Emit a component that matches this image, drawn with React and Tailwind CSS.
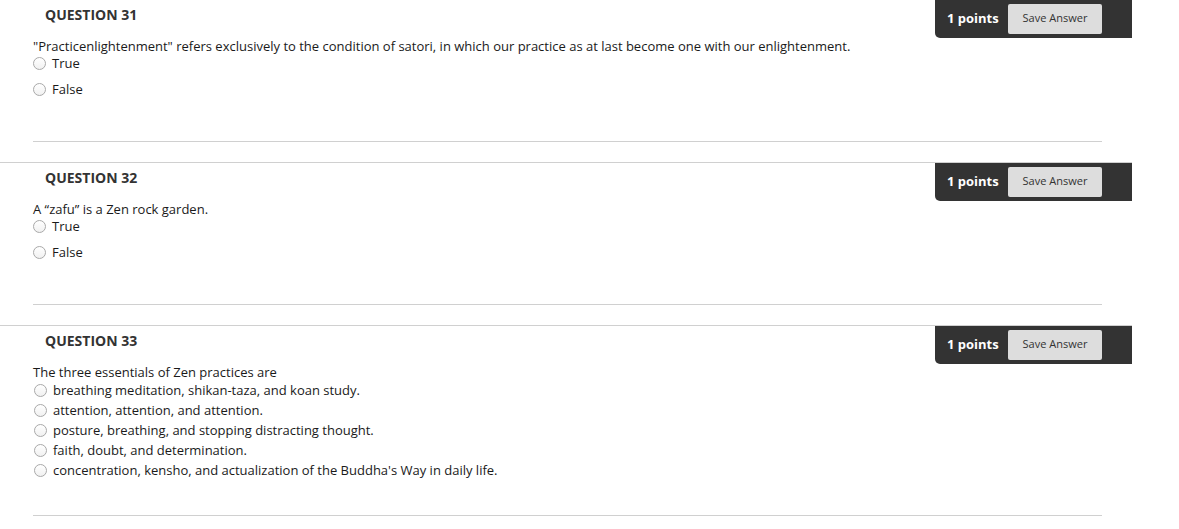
import React from 'react';

const questions = [
    {
        number: 31,
        text: '"Practicenlightenment" refers exclusively to the condition of satori, in which our practice as at last become one with our enlightenment.',
        type: 'tf',
        options: ['True', 'False'],
    },
    {
        number: 32,
        text: 'A \u201Czafu\u201D is a Zen rock garden.',
        type: 'tf',
        options: ['True', 'False'],
    },
    {
        number: 33,
        text: 'The three essentials of Zen practices are',
        type: 'mc',
        options: [
            'breathing meditation, shikan-taza, and koan study.',
            'attention, attention, and attention.',
            'posture, breathing, and stopping distracting thought.',
            'faith, doubt, and determination.',
            "concentration, kensho, and actualization of the Buddha's Way in daily life.",
        ],
    },
];

// Plain radio circle like the browser default on mac
const Radio = () => (
    <span className="inline-block w-[13px] h-[13px] rounded-full border border-[#a9a9a9] bg-gradient-to-b from-white to-[#f1f1f1] shrink-0" />
);

const Question = ({ q, first }) => (
    <section className={`w-[1132px] ${first ? '' : 'border-t border-[#d0d0d0]'}`}>
        <div className="flex justify-between items-start h-[38px]">
            <h3 className="pl-[45px] pt-[5px] text-[14px] leading-[20px] font-bold text-[#333]">
                QUESTION {q.number}
            </h3>
            <div className="flex items-center w-[197px] h-[38px] bg-[#333333] rounded-bl-[5px] pl-[12px] pb-[1px]">
                <span className="text-white font-bold text-[13px] w-[61px]">1 points</span>
                <button
                    type="button"
                    className="w-[94px] h-[30px] bg-[#dddddd] text-[#333] text-[11px] rounded-[2px]"
                >
                    Save Answer
                </button>
            </div>
        </div>

        <div className="pl-[33px] text-[13px] text-[#1a1a1a]">
            <p className="leading-[16px]">{q.text}</p>
            {q.type === 'tf' ? (
                <div className="flex flex-col gap-[8px]">
                    {q.options.map((opt) => (
                        <label key={opt} className="flex items-center gap-[6px] leading-[18px]">
                            <Radio />
                            <span>{opt}</span>
                        </label>
                    ))}
                </div>
            ) : (
                <div className="flex flex-col">
                    {q.options.map((opt) => (
                        <label key={opt} className="flex items-center gap-[6px] leading-[20px] pl-[1px]">
                            <Radio />
                            <span>{opt}</span>
                        </label>
                    ))}
                </div>
            )}
        </div>

        <hr className={`ml-[33px] mr-[30px] border-0 border-t border-[#d0d0d0] ${q.type === 'tf' ? 'mt-[43px]' : 'mt-[35px]'} mb-[20px]`} />
    </section>
);

export default function App() {
    return (
        <div className="bg-white min-h-screen" style={{ fontFamily: '"Open Sans", "Liberation Sans", sans-serif' }}>
            {questions.map((q, i) => (
                <Question key={q.number} q={q} first={i === 0} />
            ))}
        </div>
    );
}
